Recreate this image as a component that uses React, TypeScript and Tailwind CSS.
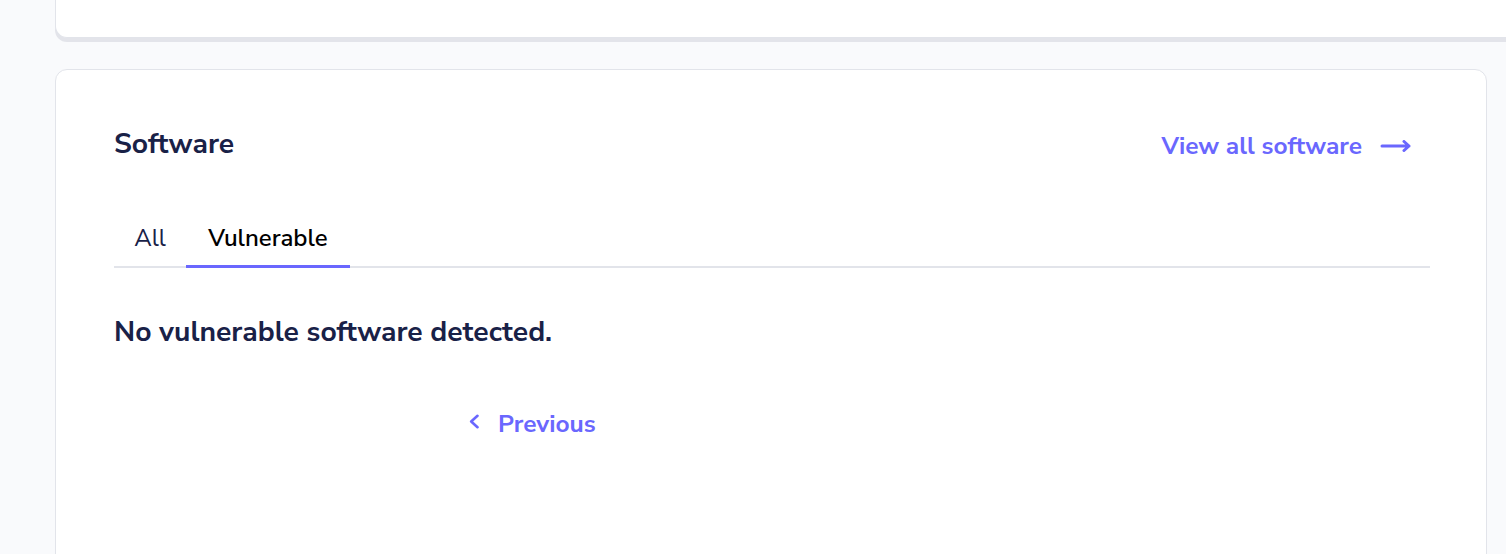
import React from "react";

export default function App() {
  const font = { fontFamily: '"Nunito Sans", Lato, "Open Sans", sans-serif' };
  return (
    <div className="w-[1506px] h-[554px] overflow-hidden bg-[#f9fafc] pl-[55px]" style={font}>
      <div className="h-[50px] -mt-[12px] bg-white border border-t-0 border-r-0 border-[#e2e4ea] rounded-bl-[12px] shadow-[0_4px_0_0_#e3e4ea]" />
      <div className="mt-[31px] mr-[19px] h-[600px] bg-white border border-[#e2e4ea] rounded-[12px] pt-[58px] pl-[58px] pr-[56px]">
        <div className="flex items-center justify-between h-[32px]">
          <h2 className="text-[28.3px] leading-[32px] font-bold text-[#192147]">Software</h2>
          <a className="flex items-center gap-[18px] text-[24.5px] leading-[32px] font-bold text-[#6a67fe] mr-[18px] mt-[3px]">
            View all software
            <svg width="32" height="12" viewBox="0 0 32 12" fill="none" stroke="#6a67fe" strokeWidth="3" strokeLinecap="round" strokeLinejoin="round">
              <path d="M2 6h27M24 1.5l5 4.5-5 4.5" />
            </svg>
          </a>
        </div>
        <div className="mt-[63px] flex shadow-[inset_0_-2px_0_0_#e2e4ea]">
          <div className="w-[72px] text-center pb-[12px] text-[24px] leading-[30px] text-[#192147] border-b-[3px] border-transparent">All</div>
          <div className="w-[164px] text-center pb-[12px] text-[24px] leading-[30px] font-semibold text-black border-b-[3px] border-[#6a67fe]">Vulnerable</div>
        </div>
        <p className="mt-[48px] text-[28.3px] leading-[32px] font-bold text-[#192147]">No vulnerable software detected.</p>
        <div className="mt-[58px] ml-[355px] flex items-center gap-[18px] text-[24.5px] leading-[32px] font-bold text-[#6a67fe]">
          <svg className="-mt-[4px]" width="11" height="15" viewBox="0 0 11 15" fill="none" stroke="#6a67fe" strokeWidth="2.6" strokeLinecap="round" strokeLinejoin="round">
            <path d="M8.5 1.8L2.2 7.5l6.3 5.7" />
          </svg>
          <span className="mt-[2px]">Previous</span>
        </div>
      </div>
    </div>
  );
}
